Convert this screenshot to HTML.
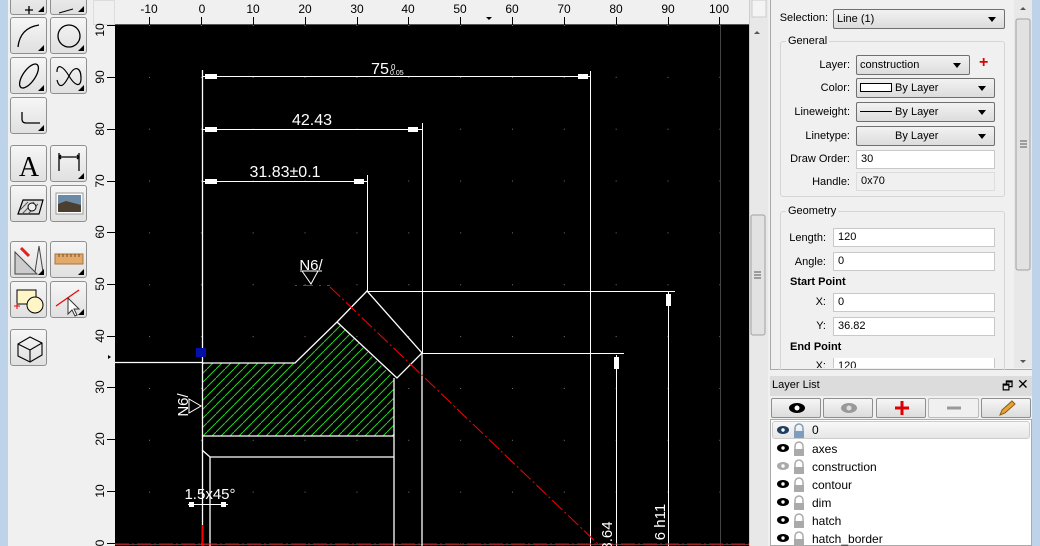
<!DOCTYPE html>
<html><head><meta charset="utf-8"><style>
*{box-sizing:border-box;margin:0;padding:0}
body{width:1040px;height:546px;overflow:hidden;background:#f0f0f0;font-family:"Liberation Sans",sans-serif;font-size:11px;color:#000;position:relative}
.abs{position:absolute}
.tb{position:absolute;width:37px;height:37px;border:1px solid #8e8f8f;border-radius:3px;background:linear-gradient(#f6f6f6,#e0e0e0)}
.tb svg{position:absolute;left:0;top:0}
.tri:after{content:"";position:absolute;right:2px;bottom:2px;border-left:6px solid transparent;border-bottom:6px solid #000}
.lbl{position:absolute;text-align:right;font-size:11px}
.combo{position:absolute;border:1px solid #707070;border-radius:2px;background:linear-gradient(#f2f2f2,#dcdcdc);height:20px;font-size:11px;line-height:18px;padding-left:3px}
.combo:after{content:"";position:absolute;right:8px;top:7px;border-left:4px solid transparent;border-right:4px solid transparent;border-top:5px solid #000}
.inp{position:absolute;border:1px solid #c8c8c8;background:#fff;height:19px;font-size:11px;line-height:17px;padding-left:4px}
.grp{position:absolute;border:1px solid #d5d5d5;border-radius:3px}
.grpt{position:absolute;background:#f0f0f0;padding:0 2px;font-size:11px}
.lrow{position:absolute;left:812px;font-size:12px}
.lb{position:absolute;top:398px;height:20px;border:1px solid #8e8f8f;border-radius:2px;background:linear-gradient(#f6f6f6,#dcdcdc)}
</style></head><body>
<div class="abs" style="left:0;top:0;width:8px;height:546px;background:#bcd3ea"></div>
<div class="abs" style="left:8px;top:0;width:85px;height:546px;background:#f0f0f0"></div>
<div class="tb tri" style="left:10px;top:-22px"><svg width="37" height="37"><path d="M14 31h8M18 27v8" stroke="#000" stroke-width="1.3"/></svg></div>
<div class="tb tri" style="left:50px;top:-22px"><svg width="37" height="37"><path d="M8 34l14-4" stroke="#000"/></svg></div>
<div class="tb tri" style="left:10px;top:17px"><svg width="37" height="37"><path d="M7 29Q9 10 28 7" fill="none" stroke="#000" stroke-width="1.3"/></svg></div>
<div class="tb tri" style="left:50px;top:17px"><svg width="37" height="37"><circle cx="18" cy="18" r="11" fill="none" stroke="#000" stroke-width="1.3"/></svg></div>
<div class="tb tri" style="left:10px;top:57px"><svg width="37" height="37"><ellipse cx="18" cy="18" rx="14" ry="6" transform="rotate(-55 18 18)" fill="none" stroke="#000" stroke-width="1.3"/></svg></div>
<div class="tb tri" style="left:50px;top:57px"><svg width="37" height="37"><path d="M6 14C6 5 12 8 18 18S30 30 30 20 24 6 18 18 8 30 6 22" fill="none" stroke="#000" stroke-width="1.2"/></svg></div>
<div class="tb tri" style="left:10px;top:97px"><svg width="37" height="37"><path d="M11 14v7q0 4 4 4h14" fill="none" stroke="#000" stroke-width="1.3"/></svg></div>
<div class="tb" style="left:10px;top:145px"><svg width="37" height="37"><text x="18" y="30" font-family="Liberation Serif" font-size="28" text-anchor="middle">A</text></svg></div>
<div class="tb tri" style="left:50px;top:145px"><svg width="37" height="37"><path d="M8 7v18M28 7v18M8 11h20M10 9l-2 2 2 2M26 9l2 2-2 2" fill="none" stroke="#000" stroke-width="1.3"/></svg></div>
<div class="tb" style="left:10px;top:185px"><svg width="37" height="37"><path d="M7 28l5-14h20l-4 14z" fill="#ddd" stroke="#000" stroke-width="1.2"/><path d="M9 24l8-8M11 28l12-12M17 28l10-10" stroke="#555"/><circle cx="21" cy="21" r="4" fill="#eee" stroke="#000"/></svg></div>
<div class="tb" style="left:50px;top:185px"><svg width="37" height="37"><rect x="5" y="7" width="27" height="21" fill="#fff" stroke="#999"/><rect x="7" y="9" width="23" height="17" fill="#6a8aa6"/><path d="M7 18l8-3 15 4v7H7z" fill="#4b4030"/></svg></div>
<div class="tb tri" style="left:10px;top:241px"><svg width="37" height="37"><path d="M4 32V10l22 22z" fill="#ccc" stroke="#444"/><path d="M10 6l8 8" stroke="#d22" stroke-width="3"/><path d="M28 4l-4 26M28 4l4 26" stroke="#444"/></svg></div>
<div class="tb tri" style="left:50px;top:241px"><svg width="37" height="37"><rect x="4" y="12" width="28" height="10" fill="#e3a96a" stroke="#a6723e"/><path d="M8 12v3M12 12v3M16 12v3M20 12v3M24 12v3M28 12v3" stroke="#7a4f22"/></svg></div>
<div class="tb" style="left:10px;top:281px"><svg width="37" height="37"><rect x="6" y="8" width="19" height="14" fill="#fff6c8" stroke="#000"/><circle cx="24" cy="23" r="8" fill="#fff6c8" stroke="#000"/><path d="M3 24h6M6 21v6" stroke="#e00"/></svg></div>
<div class="tb tri" style="left:50px;top:281px"><svg width="37" height="37"><path d="M5 24L28 8" stroke="#e00" stroke-width="1.2"/><path d="M17 16v16l4-4 3 6 2-1-3-6h5z" fill="#fff" stroke="#333"/></svg></div>
<div class="tb" style="left:10px;top:329px"><svg width="37" height="37"><path d="M7 14l12-7 12 6v12l-12 7-12-6z M7 14l12 6 12-7 M19 20v12" fill="none" stroke="#000" stroke-width="1.1"/></svg></div>

<div class="abs" style="left:93px;top:0;width:22px;height:25px;background:#f0f0f0;border:1px solid #ddd"></div>
<svg class="abs" style="left:0;top:0" width="1040" height="546">
<rect x="115" y="0" width="634" height="25" fill="#f0f0f0"/>
<line x1="115" y1="24.5" x2="749" y2="24.5" stroke="#555"/>
<g font-family="Liberation Sans" font-size="12" text-anchor="middle" fill="#000">
<text x="149" y="13">-10</text><text x="202" y="13">0</text><text x="253" y="13">10</text><text x="305" y="13">20</text><text x="357" y="13">30</text><text x="408" y="13">40</text><text x="460" y="13">50</text><text x="512" y="13">60</text><text x="564" y="13">70</text><text x="616" y="13">80</text><text x="668" y="13">90</text><text x="719" y="13">100</text>
</g>
<g stroke="#000"><path d="M149.5 17v8M201.5 17v8M253.5 17v8M305.5 17v8M357.5 17v8M408.5 17v8M460.5 17v8M512.5 17v8M564.5 17v8M616.5 17v8M668.5 17v8M719.5 17v8"/></g>
<path d="M486 17h6l-3 3z" fill="#000"/>
<rect x="93" y="25" width="22" height="521" fill="#f0f0f0"/>
<g stroke="#000"><path d="M107 25.5h8M107 77.5h8M107 129.5h8M107 181.5h8M107 232.5h8M107 284.5h8M107 336.5h8M107 387.5h8M107 439.5h8M107 491.5h8M107 543.5h8"/></g>
<g font-family="Liberation Sans" font-size="12" text-anchor="middle">
<text transform="translate(104 30) rotate(-90)">10</text>
<text transform="translate(104 77) rotate(-90)">90</text>
<text transform="translate(104 129) rotate(-90)">80</text>
<text transform="translate(104 181) rotate(-90)">70</text>
<text transform="translate(104 232) rotate(-90)">60</text>
<text transform="translate(104 284) rotate(-90)">50</text>
<text transform="translate(104 336) rotate(-90)">40</text>
<text transform="translate(104 387) rotate(-90)">30</text>
<text transform="translate(104 439) rotate(-90)">20</text>
<text transform="translate(104 491) rotate(-90)">10</text>
<text transform="translate(104 543) rotate(-90)">0</text>
</g>
<path d="M108 355l3 2-3 2z" fill="#000"/>
<rect x="115" y="25" width="634" height="521" fill="#000"/>
<defs><pattern id="gd" x="149" y="25" width="51.85" height="51.85" patternUnits="userSpaceOnUse"><rect x="0" y="0" width="1" height="1" fill="#777"/></pattern></defs>
<rect x="115" y="25" width="634" height="521" fill="url(#gd)"/>
<line x1="720.5" y1="25" x2="720.5" y2="546" stroke="#444"/>
<line x1="115" y1="544.5" x2="749" y2="544.5" stroke="#444"/>
<clipPath id="hc"><path d="M202 363H295L337 322L394 378V436H202Z"/></clipPath>
<defs><pattern id="hp" x="0" y="0" width="9" height="9" patternUnits="userSpaceOnUse"><path d="M-1 10L10 -1" stroke="#1fd41f" stroke-width="1"/></pattern></defs>
<path d="M202 363H295L337 322L394 378V436H202Z" fill="url(#hp)"/>
<g stroke="#fff" fill="none" stroke-width="1.3">
<path d="M115 362.5H202"/>
<path d="M202.5 70V546"/>
<path d="M202 363H295L337 322L367 291L422 353L397 378L337 322"/>
<path d="M394 378V546M202 436H394M202 450L210 457H394M210 457V546M422 353V546"/>
</g>
<g stroke="#fff" fill="none" stroke-width="1">
<path d="M202 76.5H590M590.5 71V546M202 129.5H422M422.5 123V353M202 181.5H367M367.5 175V291M367 291.5H675M422 353.5H624M616.5 355V546M668.5 292V546"/>
<path d="M188 504.5H228"/>
</g>
<g fill="#fff">
<path d="M205 74h12v5h-12zM578 74h10v5h-10zM205 127h12v5h-12zM408 127h10v5h-10zM205 179h12v5h-12zM354 179h10v5h-10zM614 357h5v12h-5zM666 294h5v12h-5zM189 502h5v5h-5zM221 502h5v5h-5z"/>
</g>
<rect x="196" y="348" width="10" height="9" fill="#0010a8"/>
<g stroke="#f00" fill="none" stroke-width="1" stroke-dasharray="14 3 2 3">
<path d="M330 287L600 546"/>
<path d="M115 544H749"/>
</g>
<path d="M295 285.5H330" stroke="#f00" stroke-dasharray="2 6 10 6"/>
<path d="M202.5 525V546" stroke="#f00"/>
<g fill="#fff" font-family="Liberation Sans" font-size="16" text-anchor="middle">
<text x="380" y="74" textLength="18" lengthAdjust="spacingAndGlyphs">75</text>
<text x="391" y="70" font-size="8" text-anchor="start">0</text>
<text x="390" y="75" font-size="7" text-anchor="start">0.05</text>
<text x="312" y="125">42.43</text>
<text x="285" y="177">31.83±0.1</text>
<text x="210" y="499" font-size="15">1.5x45°</text>
<text x="311" y="270" font-size="15">N6/</text>
<text transform="translate(188 405) rotate(-90)" font-size="15">N6/</text>
<text transform="translate(612 536) rotate(-90)" font-size="15">3.64</text>
<text transform="translate(665 522) rotate(-90)" font-size="15">6 h11</text>
</g>
<g stroke="#fff" fill="none"><path d="M302 271L311 284L318 271ZM300 271H322"/><path d="M189 399L201 406L189 413Z"/></g>
<rect x="749" y="0" width="19" height="546" fill="#e8e8e8"/>
<line x1="749.5" y1="0" x2="749.5" y2="546" stroke="#ccc"/>
<rect x="752" y="0" width="14" height="17" fill="#f4f4f4" stroke="#ccc"/>
<path d="M754 34l3-3 3 3z" fill="#555"/>
<rect x="751" y="215" width="14" height="120" rx="2" fill="#e2e2e2" stroke="#a0a0a0"/>
<path d="M754 272h7M754 275h7M754 278h7" stroke="#555"/>
<rect x="1014" y="0" width="18" height="368" fill="#e8e8e8"/>
<rect x="1016" y="19" width="14" height="251" rx="2" fill="#e2e2e2" stroke="#a0a0a0"/>
<path d="M1020 141h7M1020 144h7M1020 147h7" stroke="#555"/>
<path d="M1020 10l3-3 3 3zM1020 360l3 3 3-3z" fill="#555"/>
<rect x="1032" y="0" width="8" height="546" fill="#bcd3ea"/>
<line x1="770.5" y1="0" x2="770.5" y2="370" stroke="#aaa"/>
<line x1="770" y1="369.5" x2="1032" y2="369.5" stroke="#aaa"/>
</svg>
<div class="lbl" style="left:770px;top:12px;width:58px">Selection:</div>
<div class="combo" style="left:833px;top:9px;width:172px">Line (1)</div>
<div class="grp" style="left:780px;top:41px;width:225px;height:156px"></div>
<div class="grpt" style="left:786px;top:35px">General</div>
<div class="lbl" style="left:780px;top:59px;width:70px">Layer:</div>
<div class="combo" style="left:856px;top:55px;width:114px">construction</div>
<div class="abs" style="left:979px;top:54px;color:#d00;font-size:16px;font-weight:bold">+</div>
<div class="lbl" style="left:780px;top:82px;width:70px">Color:</div>
<div class="combo" style="left:856px;top:78px;width:139px"><span style="display:inline-block;width:32px;height:9px;border:1px solid #000;background:#fff;vertical-align:-1px"></span> By Layer</div>
<div class="lbl" style="left:780px;top:106px;width:70px">Lineweight:</div>
<div class="combo" style="left:856px;top:102px;width:139px"><span style="display:inline-block;width:32px;height:1px;background:#000;vertical-align:3px"></span> By Layer</div>
<div class="lbl" style="left:780px;top:130px;width:70px">Linetype:</div>
<div class="combo" style="left:856px;top:126px;width:139px;padding-left:38px">By Layer</div>
<div class="lbl" style="left:780px;top:153px;width:70px">Draw Order:</div>
<div class="inp" style="left:856px;top:150px;width:139px">30</div>
<div class="lbl" style="left:780px;top:176px;width:70px">Handle:</div>
<div class="inp" style="left:856px;top:172px;width:139px;background:#f0f0f0;border-color:#ddd">0x70</div>
<div class="grp" style="left:780px;top:211px;width:225px;height:170px"></div>
<div class="grpt" style="left:786px;top:205px">Geometry</div>
<div class="lbl" style="left:780px;top:232px;width:46px">Length:</div>
<div class="inp" style="left:833px;top:228px;width:162px">120</div>
<div class="lbl" style="left:780px;top:256px;width:46px">Angle:</div>
<div class="inp" style="left:833px;top:252px;width:162px">0</div>
<div class="abs" style="left:790px;top:276px;font-weight:bold">Start Point</div>
<div class="lbl" style="left:780px;top:296px;width:46px">X:</div>
<div class="inp" style="left:833px;top:293px;width:162px">0</div>
<div class="lbl" style="left:780px;top:320px;width:46px">Y:</div>
<div class="inp" style="left:833px;top:317px;width:162px">36.82</div>
<div class="abs" style="left:790px;top:341px;font-weight:bold">End Point</div>
<div class="abs" style="left:771px;top:358px;width:243px;height:10px;overflow:hidden"><div class="lbl" style="left:9px;top:2px;width:46px">X:</div><div class="inp" style="left:62px;top:-1px;width:162px">120</div></div>
<div class="abs" style="left:768px;top:370px;width:264px;height:6px;background:#f0f0f0"></div>
<div class="abs" style="left:770px;top:376px;width:262px;height:20px;background:#dcdcdc"></div>
<div class="abs" style="left:772px;top:379px;font-size:11px">Layer List</div>
<div class="abs" style="left:1002px;top:377px;font-size:12px">🗗</div>
<div class="abs" style="left:1017px;top:376px;font-size:14px">✕</div>
<div class="lb" style="left:771px;width:50px"><svg width="50" height="20"><ellipse cx="25" cy="9" rx="8" ry="5" fill="#000"/><circle cx="25" cy="9" r="2.5" fill="#fff"/></svg></div>
<div class="lb" style="left:823px;width:50px"><svg width="50" height="20"><ellipse cx="25" cy="9" rx="8" ry="5" fill="#999"/><circle cx="25" cy="9" r="2.5" fill="#ddd"/></svg></div>
<div class="lb" style="left:876px;width:50px"><svg width="50" height="20"><path d="M18 9h14M25 2v14" stroke="#d00" stroke-width="3"/></svg></div>
<div class="lb" style="left:928px;width:51px;background:#f0f0f0;border-color:#bbb"><svg width="50" height="20"><path d="M18 9h14" stroke="#999" stroke-width="3"/></svg></div>
<div class="lb" style="left:981px;width:50px"><svg width="50" height="20"><path d="M18 16l2-5 10-9 3 3-10 9z" fill="#e8a23a" stroke="#8a5a10"/></svg></div>
<div class="abs" style="left:770px;top:419px;width:262px;height:127px;background:#fff;border:1px solid #aaa"></div>
<div class="abs" style="left:772px;top:421px;width:258px;height:18px;background:linear-gradient(#f8f8f8,#e6e6e6);border:1px solid #ccc;border-radius:3px"></div>
<svg class="abs" style="left:772px;top:420px" width="40" height="126">
<ellipse cx="11" cy="10" rx="6" ry="4" fill="#1e3e60"/><circle cx="11" cy="10" r="1.7" fill="#fff"/>
<path d="M23 12v-4a4 4 0 0 1 8 0v4" fill="none" stroke="#7f9cbd" stroke-width="1.5"/><rect x="22" y="11" width="10" height="7" fill="#7f9cbd"/>
<g fill="#000"><ellipse cx="11" cy="28" rx="6" ry="4"/><ellipse cx="11" cy="64" rx="6" ry="4"/><ellipse cx="11" cy="82" rx="6" ry="4"/><ellipse cx="11" cy="100" rx="6" ry="4"/><ellipse cx="11" cy="118" rx="6" ry="4"/></g>
<ellipse cx="11" cy="46" rx="6" ry="4" fill="#aaa"/>
<g fill="#fff"><circle cx="11" cy="28" r="1.7"/><circle cx="11" cy="46" r="1.7"/><circle cx="11" cy="64" r="1.7"/><circle cx="11" cy="82" r="1.7"/><circle cx="11" cy="100" r="1.7"/><circle cx="11" cy="118" r="1.7"/></g>
<g fill="#aaa" stroke="#aaa" stroke-width="1.5">
<path d="M23 30v-4a4 4 0 0 1 8 0v4" fill="none"/><rect x="22" y="29" width="10" height="7" stroke="none"/>
<path d="M23 48v-4a4 4 0 0 1 8 0v4" fill="none"/><rect x="22" y="47" width="10" height="7" stroke="none"/>
<path d="M23 66v-4a4 4 0 0 1 8 0v4" fill="none"/><rect x="22" y="65" width="10" height="7" stroke="none"/>
<path d="M23 84v-4a4 4 0 0 1 8 0v4" fill="none"/><rect x="22" y="83" width="10" height="7" stroke="none"/>
<path d="M23 102v-4a4 4 0 0 1 8 0v4" fill="none"/><rect x="22" y="101" width="10" height="7" stroke="none"/>
<path d="M23 120v-4a4 4 0 0 1 8 0v4" fill="none"/><rect x="22" y="119" width="10" height="7" stroke="none"/>
</g>
</svg>
<div class="lrow" style="top:423px">0</div>
<div class="lrow" style="top:442px">axes</div>
<div class="lrow" style="top:460px">construction</div>
<div class="lrow" style="top:478px">contour</div>
<div class="lrow" style="top:496px">dim</div>
<div class="lrow" style="top:514px">hatch</div>
<div class="lrow" style="top:532px">hatch_border</div>
</body></html>
